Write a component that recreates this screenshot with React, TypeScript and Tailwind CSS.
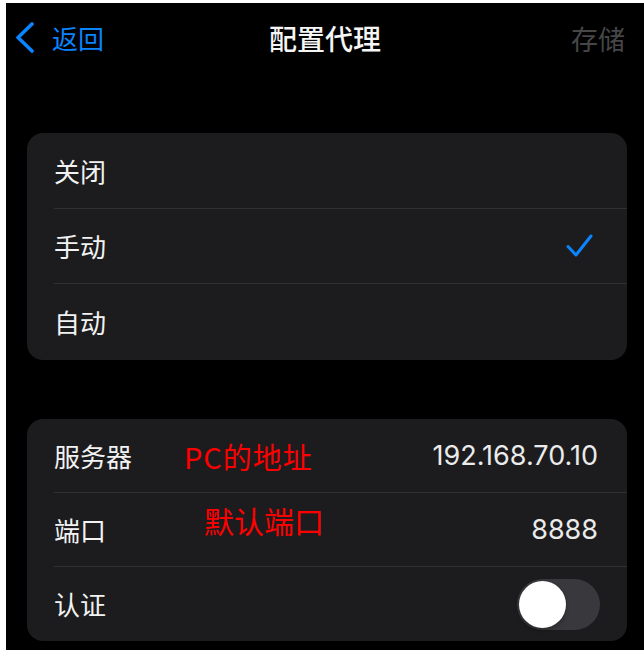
import React from "react";

const font = { fontFamily: '"Noto Sans CJK SC", "Noto Sans", sans-serif' };

const modes = [
  { label: "关闭", h: "h-[76px]" },
  { label: "手动", h: "h-[75px]", checked: true },
  { label: "自动", h: "h-[76px]" },
];

const Row: React.FC<{ h: string; last?: boolean; children: React.ReactNode }> = ({ h, last, children }) => (
  <div className={`flex ${h} pl-[27px]`}>
    <div
      className={`flex flex-1 items-center justify-between ${last ? "" : "border-b border-[#303033]"}`}
    >
      {children}
    </div>
  </div>
);

export default function App() {
  return (
    <div className="h-[650px] w-[644px] overflow-hidden bg-white pl-[6px] pt-[3px]" style={font}>
      <div className="h-full w-full bg-black">
        {/* nav bar */}
        <div className="grid h-[70px] grid-cols-[1fr_auto_1fr] items-center">
          <div className="flex items-center pl-[9px] text-[26px] leading-none text-[#0a84ff]">
            <svg width="22" height="32" viewBox="0 0 22 32" className="mr-[15px] -mt-[2px]">
              <polyline
                points="17,3 3,16.5 17,30"
                fill="none"
                stroke="#0a84ff"
                strokeWidth="3.6"
                strokeLinecap="round"
                strokeLinejoin="round"
              />
            </svg>
            <span>返回</span>
          </div>
          <div className="text-[28px] font-medium leading-none text-[#f5f5f5]">配置代理</div>
          <div className="flex justify-end pr-[19px] text-[27px] leading-none text-[#464648]">存储</div>
        </div>

        {/* proxy mode */}
        <div className="ml-[21px] mr-[17px] mt-[60px] rounded-[16px] bg-[#1c1c1e] text-[26px] leading-none text-[#f2f2f2]">
          {modes.map((m, i) => (
            <Row key={m.label} h={m.h} last={i === modes.length - 1}>
              <span>{m.label}</span>
              {m.checked && (
                <svg width="30" height="26" viewBox="0 0 30 26" className="mr-[32px]">
                  <polyline
                    points="3,13.5 11,22 26,3"
                    fill="none"
                    stroke="#0a84ff"
                    strokeWidth="3"
                    strokeLinecap="round"
                    strokeLinejoin="round"
                  />
                </svg>
              )}
            </Row>
          ))}
        </div>

        {/* server settings */}
        <div className="relative ml-[21px] mr-[17px] mt-[59px] rounded-[16px] bg-[#1c1c1e] text-[26px] leading-none text-[#f2f2f2]">
          <Row h="h-[74px]">
            <span>服务器</span>
            <span className="mr-[29px] text-[27px] text-[#ebebeb]" style={{ fontFamily: "Inter, sans-serif" }}>
              192.168.70.10
            </span>
          </Row>
          <Row h="h-[74px]">
            <span>端口</span>
            <span className="mr-[29px] text-[27px] text-[#ebebeb]" style={{ fontFamily: "Inter, sans-serif" }}>
              8888
            </span>
          </Row>
          <Row h="h-[74px]" last>
            <span>认证</span>
            <div className="mr-[27px] flex h-[51px] w-[83px] items-center rounded-full bg-[#39393d] p-[2px]">
              <div className="h-[47px] w-[47px] rounded-full bg-white shadow-[0_2px_4px_rgba(0,0,0,0.3)]" />
            </div>
          </Row>

          {/* red annotations drawn over the screenshot */}
          <div className="absolute left-[157px] top-[23px] text-[29px] leading-none tracking-[1px] text-[#ff0000]">
            PC的地址
          </div>
          <div className="absolute left-[177px] top-[86px] text-[30px] leading-none text-[#ff0000]">默认端口</div>
        </div>
      </div>
    </div>
  );
}
